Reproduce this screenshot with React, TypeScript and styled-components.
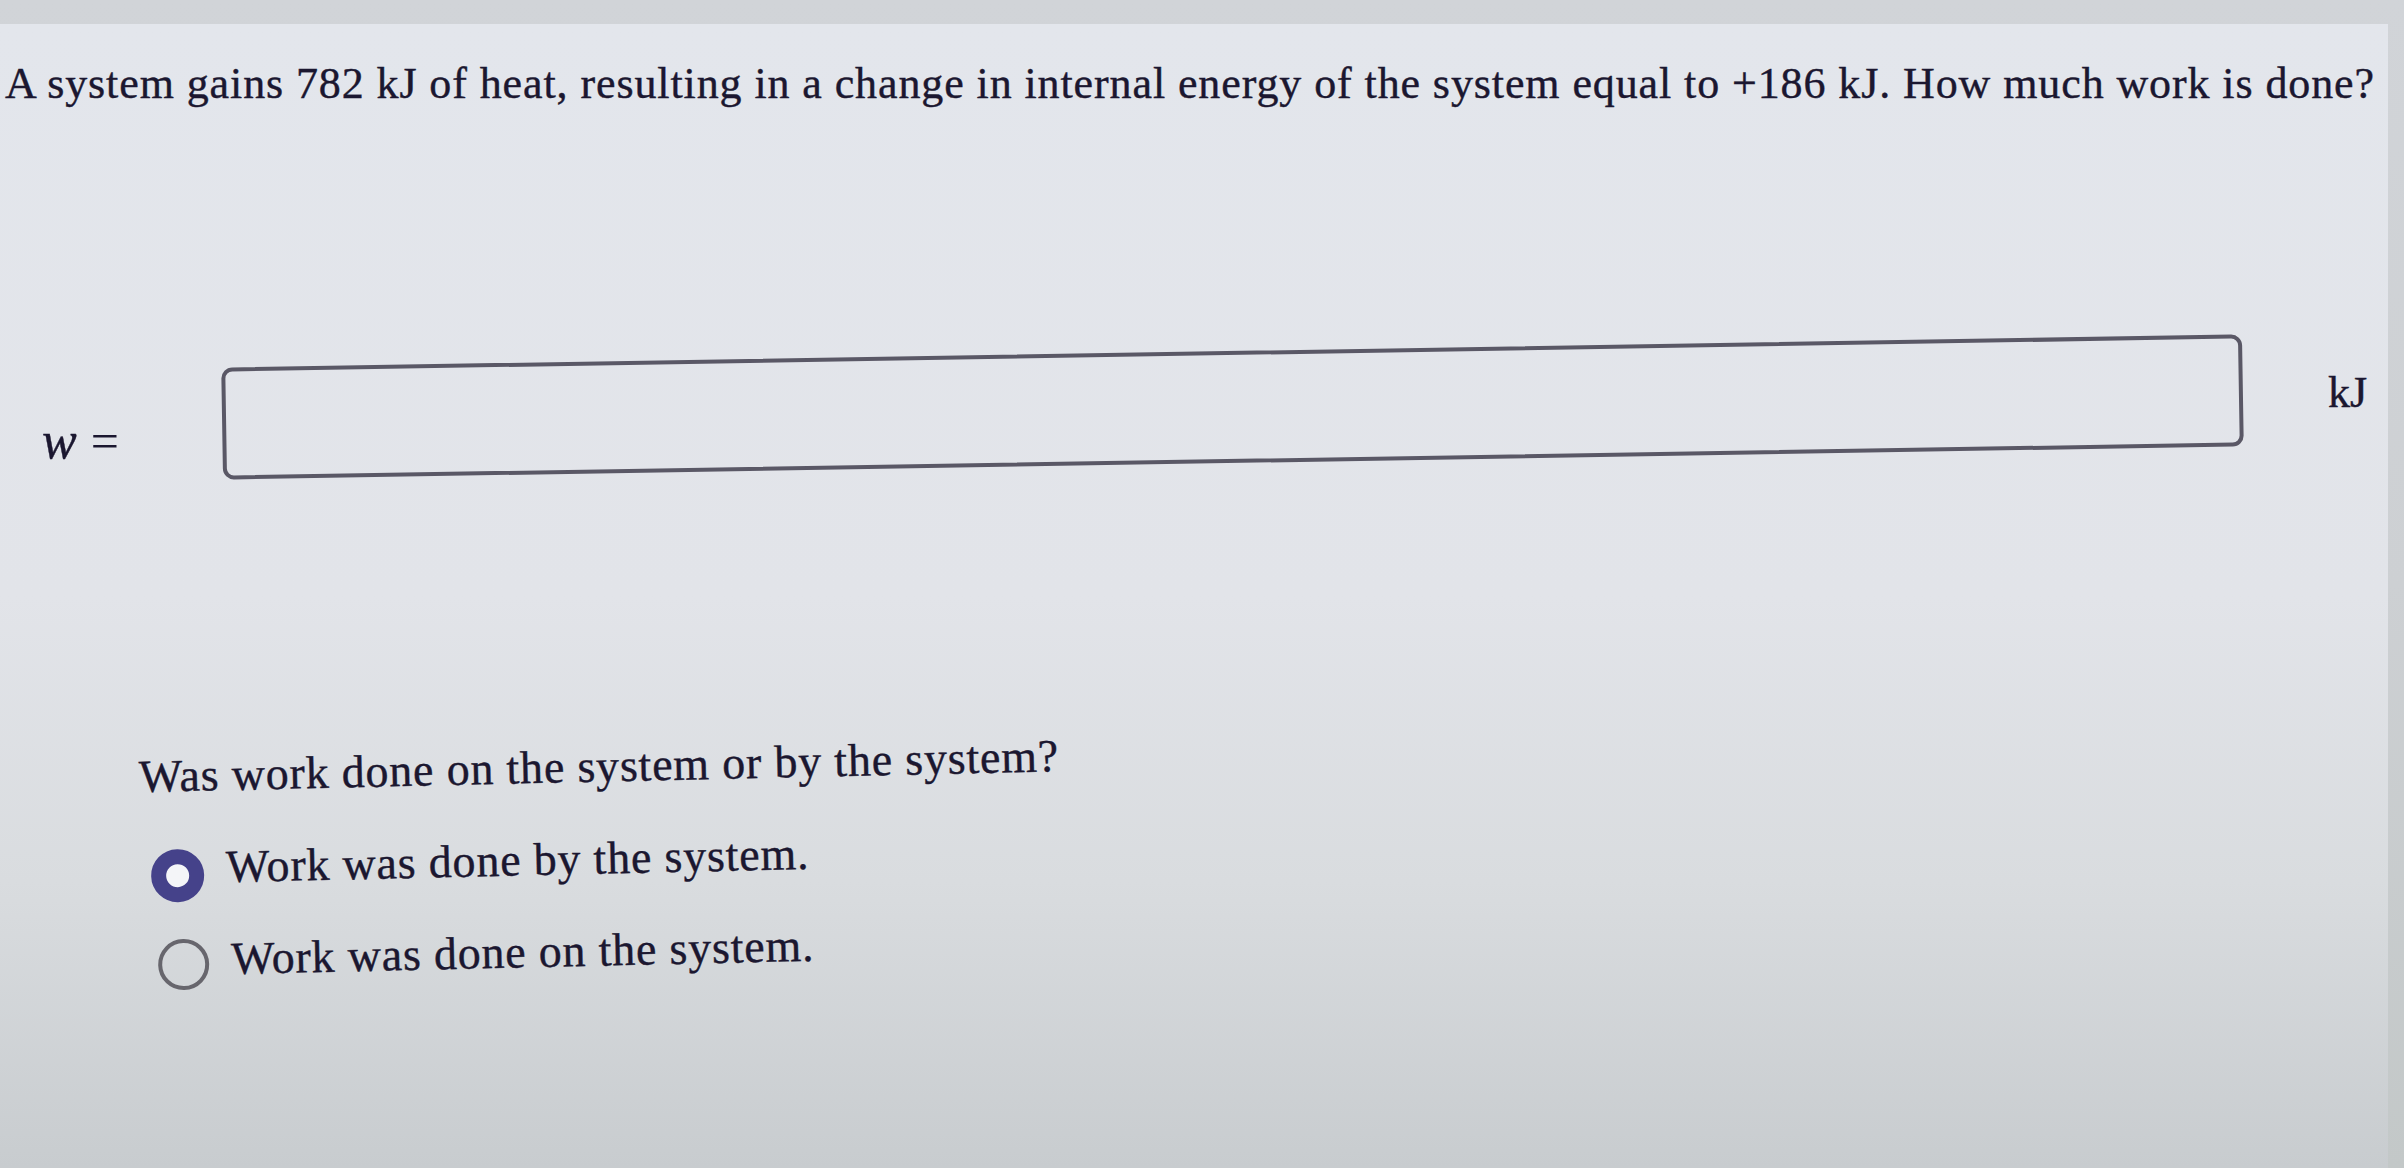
import { FC } from "react";
import styled, { createGlobalStyle } from "styled-components";

const GlobalStyle = createGlobalStyle`
  html,
  body {
    margin: 0;
    padding: 0;
  }
  body {
    width: 2404px;
    height: 1168px;
    overflow: hidden;
    background: linear-gradient(to bottom, #d1d4d8 0%, #cdd0d3 50%, #c3c8c8 100%);
    font-family: "Liberation Serif", "Times New Roman", serif;
  }
`;

const Page = styled.div`
  width: 2404px;
  height: 1168px;
  padding-top: 24px;
  padding-right: 16px;
  box-sizing: border-box;
  display: flex;
`;

const Panel = styled.main`
  flex: 1;
  padding-top: 36px;
  box-sizing: border-box;
  background: linear-gradient(
    to bottom,
    #e3e6ec 0%,
    #e2e4e9 50%,
    #d9dcdf 75%,
    #c8cccf 100%
  );
  color: #1b1730;
  -webkit-text-stroke: 0.4px #1b1730;
`;

const Question = styled.p`
  margin: 0 0 0 5px;
  font-size: 44px;
  line-height: 48px;
  letter-spacing: 0.9px;
  white-space: nowrap;
`;

const AnswerRow = styled.div`
  display: flex;
  align-items: flex-start;
  height: 112px;
  margin-top: 243px;
  padding-left: 42px;
`;

const MathLabel = styled.div`
  width: 180px;
  margin-top: 64px;
  font-size: 52px;
  line-height: 52px;
  white-space: nowrap;
`;

const MathVar = styled.span`
  font-style: italic;
`;

const MathEq = styled.span`
  margin-left: 14px;
  font-size: 50px;
  -webkit-text-stroke: 0;
`;

const AnswerInput = styled.input`
  width: 2021px;
  height: 112px;
  box-sizing: border-box;
  border: 4px solid #5a5866;
  border-radius: 11px;
  background: transparent;
  outline: none;
  transform: rotate(-0.94deg);
  font-family: inherit;
  font-size: 40px;
`;

const Unit = styled.div`
  margin-left: 85px;
  margin-top: 20px;
  font-size: 44px;
  line-height: 44px;
`;

const Section = styled.section`
  margin-top: 284px;
  margin-left: 141px;
  transform: rotate(-1.3deg);
  transform-origin: left center;
`;

const Prompt = styled.p`
  margin: 0 0 27px;
  font-size: 46px;
  line-height: 60px;
  letter-spacing: 0.8px;
  white-space: nowrap;
`;

const OptionList = styled.div`
  display: flex;
  flex-direction: column;
  gap: 28px;
`;

const Option = styled.label<{ $indent: number }>`
  display: flex;
  align-items: center;
  gap: 22px;
  margin-left: ${(p) => p.$indent}px;
  font-size: 46px;
  line-height: 60px;
  letter-spacing: 0.8px;
  white-space: nowrap;
  cursor: pointer;
`;

const Radio = styled.span<{ $checked: boolean }>`
  flex: none;
  width: ${(p) => (p.$checked ? 53 : 51)}px;
  height: ${(p) => (p.$checked ? 53 : 51)}px;
  margin-top: ${(p) => (p.$checked ? 16 : 8)}px;
  box-sizing: border-box;
  border-radius: 50%;
  border: ${(p) => (p.$checked ? "15.5px solid #45428a" : "4px solid #67666d")};
  background: ${(p) => (p.$checked ? "#f4f5f8" : "transparent")};
`;

const options = [
  { text: "Work was done by the system.", checked: true, indent: 10 },
  { text: "Work was done on the system.", checked: false, indent: 15 },
];

const App: FC = () => {
  return (
    <>
      <GlobalStyle />
      <Page>
        <Panel>
          <Question>
            A system gains 782 kJ of heat, resulting in a change in internal
            energy of the system equal to +186 kJ. How much work is done?
          </Question>

          <AnswerRow>
            <MathLabel>
              <MathVar>w</MathVar>
              <MathEq>=</MathEq>
            </MathLabel>
            <AnswerInput type="text" aria-label="w" />
            <Unit>kJ</Unit>
          </AnswerRow>

          <Section>
            <Prompt>Was work done on the system or by the system?</Prompt>
            <OptionList>
              {options.map((o) => (
                <Option key={o.text} $indent={o.indent}>
                  <Radio $checked={o.checked} />
                  {o.text}
                </Option>
              ))}
            </OptionList>
          </Section>
        </Panel>
      </Page>
    </>
  );
};

export default App;
